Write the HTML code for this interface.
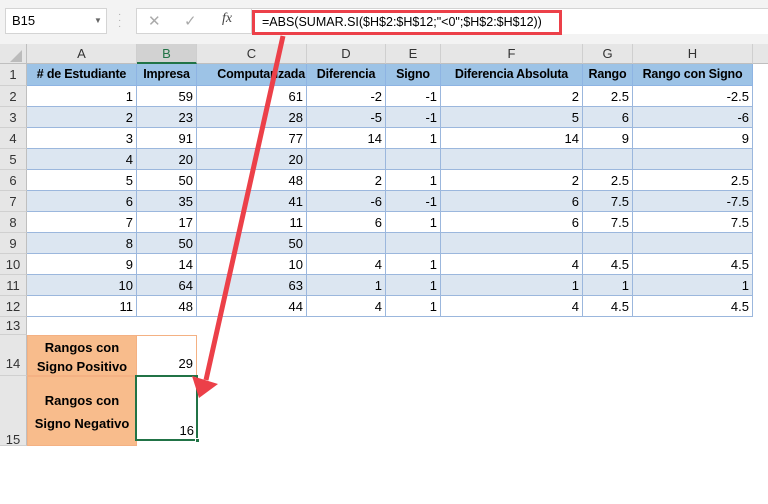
<!DOCTYPE html><html><head><style>
body{margin:0;width:768px;height:446px;overflow:hidden;background:#fff;font-family:"Liberation Sans",Arial,sans-serif;position:relative}
.a{position:absolute;box-sizing:border-box}
.c{position:absolute;box-sizing:border-box;font-size:13px;line-height:21px;white-space:nowrap;overflow:visible;padding:0 3px;color:#000}
.rh{position:absolute;left:0;width:27px;background:#e6e6e6;border-bottom:1px solid #d0d0d0;border-right:1px solid #bfbfbf;font-size:13px;text-align:center;color:#333;box-sizing:border-box}
.ch{position:absolute;top:44px;height:20px;background:#e6e6e6;border-right:1px solid #cfcfcf;border-bottom:1px solid #bfbfbf;font-size:13px;text-align:center;line-height:20px;color:#333;box-sizing:border-box}
</style></head><body>
<div class="a" style="left:0;top:0;width:768px;height:44px;background:#f3f3f3"></div>
<div class="a" style="left:5px;top:8px;width:102px;height:26px;background:#fff;border:1px solid #d4d4d4;font-size:13px;line-height:24px;padding-left:6px">B15<span style="position:absolute;left:88px;top:0;font-size:8px;color:#666">▼</span></div>
<div class="a" style="left:118px;top:12px;width:3px;height:18px;color:#aaa;font-size:10px;line-height:6px">·<br>·<br>·</div>
<div class="a" style="left:136px;top:8px;width:116px;height:26px;background:#fff;border:1px solid #d4d4d4"></div>
<div class="a" style="left:148px;top:12px;font-size:15px;color:#aaa">✕</div>
<div class="a" style="left:184px;top:12px;font-size:15px;color:#aaa">✓</div>
<div class="a" style="left:222px;top:11px;font-size:14px;font-style:italic;font-family:'Liberation Serif',serif;color:#444">fx</div>
<div class="a" style="left:252px;top:8px;width:516px;height:26px;background:#fff;border-top:1px solid #d4d4d4"></div>
<div class="a" style="left:252px;top:10px;width:310px;height:25px;border:3px solid #ec4049;font-size:12.5px;line-height:19px;padding-left:7px;background:#fff;white-space:nowrap;overflow:hidden">=ABS(SUMAR.SI($H$2:$H$12;"&lt;0";$H$2:$H$12))</div>
<div class="a" style="left:0;top:44px;width:27px;height:20px;background:#e6e6e6;border-right:1px solid #bfbfbf;border-bottom:1px solid #bfbfbf"></div>
<div class="a" style="left:10px;top:50px;width:0;height:0;border-left:12px solid transparent;border-bottom:12px solid #bbb"></div>
<div class="ch" style="left:27px;width:110px">A</div>
<div class="ch" style="left:137px;width:60px;background:#d2d2d2;color:#217346;border-bottom:2px solid #217346">B</div>
<div class="ch" style="left:197px;width:110px">C</div>
<div class="ch" style="left:307px;width:79px">D</div>
<div class="ch" style="left:386px;width:55px">E</div>
<div class="ch" style="left:441px;width:142px">F</div>
<div class="ch" style="left:583px;width:50px">G</div>
<div class="ch" style="left:633px;width:120px">H</div>
<div class="ch" style="left:753px;width:15px;border-right:0"></div>
<div id="g"></div>
<svg class="a" style="left:0;top:0" width="768" height="446"><line x1="283" y1="36" x2="206" y2="380" stroke="#ec4049" stroke-width="5"/><polygon points="192,376 218,384 199,398" fill="#ec4049"/></svg>
<script>
var cols=[27,137,197,307,386,441,583,633,753];
var data=[[1,59,61,-2,-1,2,2.5,-2.5],[2,23,28,-5,-1,5,6,-6],[3,91,77,14,1,14,9,9],[4,20,20,'','','','',''],[5,50,48,2,1,2,2.5,2.5],[6,35,41,-6,-1,6,7.5,-7.5],[7,17,11,6,1,6,7.5,7.5],[8,50,50,'','','','',''],[9,14,10,4,1,4,4.5,4.5],[10,64,63,1,1,1,1,1],[11,48,44,4,1,4,4.5,4.5]];
var hd=["# de Estudiante","Impresa","Computarizada","Diferencia","Signo","Diferencia Absoluta","Rango","Rango con Signo"];
var h='';
function rh(n,t,ht,ex){h+='<div class="rh" style="top:'+t+'px;height:'+ht+'px;line-height:'+(ex||ht*2-22)+'px;'+'">'+n+'</div>';}
rh(1,64,22,22);
for(var j=0;j<8;j++){h+='<div class="c" style="left:'+cols[j]+'px;top:64px;width:'+(cols[j+1]-cols[j])+'px;height:22px;background:#9dc3e6;font-weight:bold;text-align:center;border-right:1px solid #8eb4e3;border-bottom:1px solid #8eb4e3;font-size:12.5px;letter-spacing:-0.2px;padding:0 1px;'+(j==2?'text-align:right;':'')+'">'+hd[j]+'</div>';}
for(var i=0;i<11;i++){var t=86+i*21;rh(i+2,t,21,21);var bg=i%2?'#dce6f1':'#fff';
for(var j=0;j<8;j++){h+='<div class="c" style="left:'+cols[j]+'px;top:'+t+'px;width:'+(cols[j+1]-cols[j])+'px;height:21px;background:'+bg+';text-align:right;border-right:1px solid #9bb7dd;border-bottom:1px solid #9bb7dd">'+data[i][j]+'</div>';}}
rh(13,317,18,18);rh(14,335,41,58);rh(15,376,70,128);
h+='<div class="a" style="left:27px;top:335px;width:110px;height:41px;background:#f8bc8c;border:1px solid #f4b183;font-weight:bold;font-size:13px;text-align:center;line-height:19px;padding-top:2px">Rangos con<br>Signo Positivo</div>';
h+='<div class="a" style="left:137px;top:335px;width:60px;height:41px;border:1px solid #f4b183;border-left:0;font-size:13px;text-align:right;padding:20px 3px 0 0">29</div>';
h+='<div class="a" style="left:27px;top:376px;width:110px;height:70px;background:#f8bc8c;border:1px solid #f4b183;font-weight:bold;font-size:13px;text-align:center;line-height:23px;padding-top:12px">Rangos con<br>Signo Negativo</div>';
h+='<div class="a" style="left:135px;top:375px;width:63px;height:66px;border:2px solid #217346;font-size:13px;text-align:right;padding:46px 2px 0 0">16</div>';
h+='<div class="a" style="left:195px;top:438px;width:5px;height:5px;background:#217346;border:1px solid #fff"></div>';
document.getElementById('g').innerHTML=h;
</script>
</body></html>
